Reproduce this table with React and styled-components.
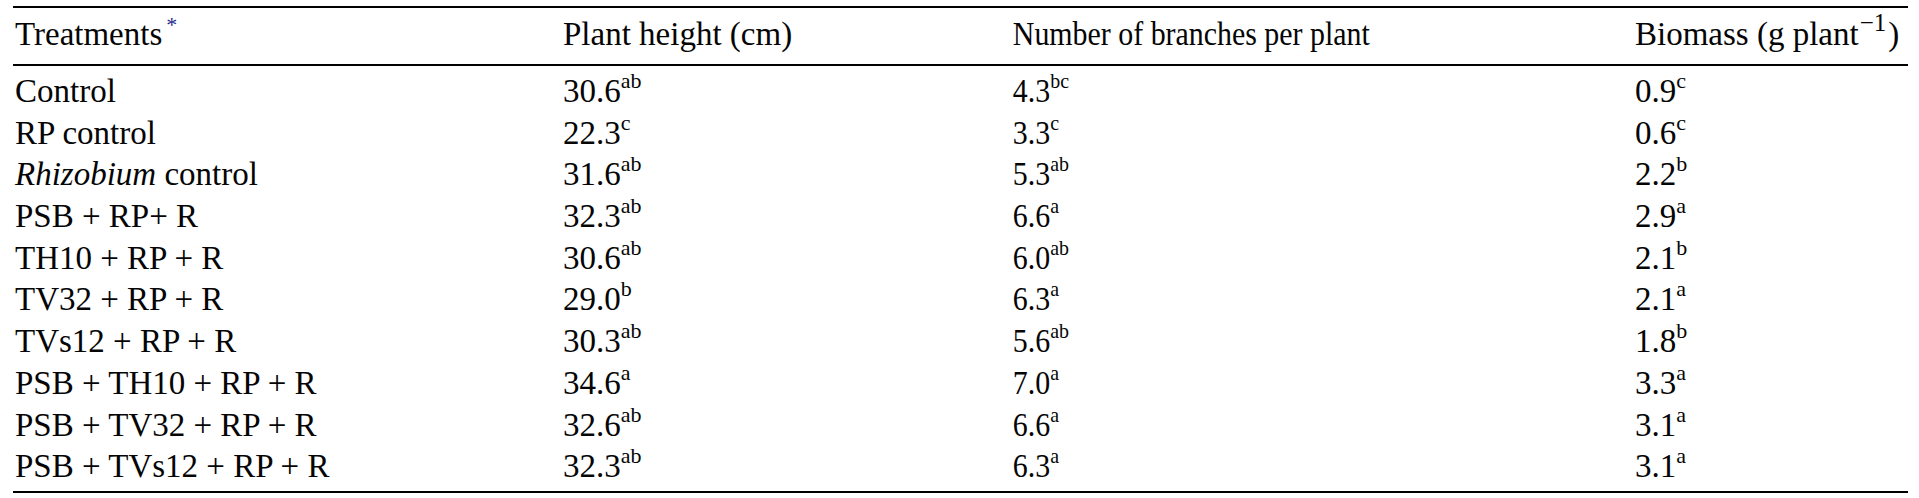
import React from "react";
import styled, { createGlobalStyle } from "styled-components";

const Global = createGlobalStyle`
  html, body { margin: 0; padding: 0; background: #ffffff; }
  body { font-family: "Liberation Serif", "Times New Roman", serif; color: #050505; }
`;

const Page = styled.div`
  padding: 6px 11px 0 13px;
  width: 1895px;
`;

const Table = styled.div`
  border-top: 2px solid #000;
  border-bottom: 2px solid #000;
  font-size: 33px;
`;

const Grid = styled.div`
  display: grid;
  grid-template-columns: 548px 450px 622px 1fr;
`;

const HeadRow = styled(Grid)`
  padding: 6px 0 10px;
  line-height: 40px;
  border-bottom: 2px solid #000;
`;

const Body = styled.div`
  padding: 5px 0 3px;
`;

const Row = styled(Grid)`
  height: 41.7px;
  line-height: 41.7px;
`;

const Cell = styled.div`
  padding-left: 2px;
  white-space: nowrap;
  transform-origin: left center;
  transform: ${(p) => (p.$narrow ? "scaleX(0.906)" : "none")};
`;

const Sup = styled.span`
  font-size: 22px;
  line-height: 0;
  vertical-align: 14px;
`;

const Note = styled.span`
  font-size: 22px;
  line-height: 0;
  vertical-align: 13px;
  margin-left: 4px;
  color: #1f2a8c;
`;

const Power = styled.span`
  font-size: 25px;
  line-height: 0;
  vertical-align: 14px;
  margin-left: 1px;
  margin-right: 2px;
`;

const Em = styled.i`
  font-style: italic;
`;

const rows = [
  [<>Control</>, "30.6", "ab", "4.3", "bc", "0.9", "c"],
  [<>RP control</>, "22.3", "c", "3.3", "c", "0.6", "c"],
  [<><Em>Rhizobium</Em> control</>, "31.6", "ab", "5.3", "ab", "2.2", "b"],
  [<>PSB + RP+ R</>, "32.3", "ab", "6.6", "a", "2.9", "a"],
  [<>TH10 + RP + R</>, "30.6", "ab", "6.0", "ab", "2.1", "b"],
  [<>TV32 + RP + R</>, "29.0", "b", "6.3", "a", "2.1", "a"],
  [<>TVs12 + RP + R</>, "30.3", "ab", "5.6", "ab", "1.8", "b"],
  [<>PSB + TH10 + RP + R</>, "34.6", "a", "7.0", "a", "3.3", "a"],
  [<>PSB + TV32 + RP + R</>, "32.6", "ab", "6.6", "a", "3.1", "a"],
  [<>PSB + TVs12 + RP + R</>, "32.3", "ab", "6.3", "a", "3.1", "a"],
];

export default function App() {
  return (
    <Page>
      <Global />
      <Table>
        <HeadRow>
          <Cell>
            Treatments<Note>*</Note>
          </Cell>
          <Cell>Plant height (cm)</Cell>
          <Cell $narrow>Number of branches per plant</Cell>
          <Cell>
            Biomass (g plant<Power>−1</Power>)
          </Cell>
        </HeadRow>
        <Body>
          {rows.map((r, i) => (
            <Row key={i}>
              <Cell>{r[0]}</Cell>
              <Cell>
                {r[1]}
                <Sup>{r[2]}</Sup>
              </Cell>
              <Cell $narrow>
                {r[3]}
                <Sup>{r[4]}</Sup>
              </Cell>
              <Cell>
                {r[5]}
                <Sup>{r[6]}</Sup>
              </Cell>
            </Row>
          ))}
        </Body>
      </Table>
    </Page>
  );
}
